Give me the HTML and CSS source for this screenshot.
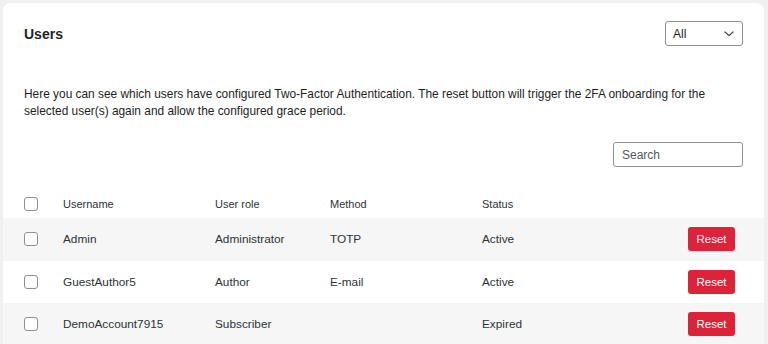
FILE: index.html
```html
<!DOCTYPE html>
<html>
<head>
<meta charset="utf-8">
<link rel="stylesheet" href="styles.css">
</head>
<body>
<div class="card">
  <div class="head">
    <h1 class="title">Users</h1>
    <div class="select">
      <span>All</span>
      <svg class="chev" width="10" height="6" viewBox="0 0 10 6"><path d="M1 1 L5 4.6 L9 1" fill="none" stroke="#3c434a" stroke-width="1.2" stroke-linecap="round" stroke-linejoin="round"/></svg>
    </div>
  </div>
  <p class="desc">Here you can see which users have configured Two-Factor Authentication. The reset button will trigger the 2FA onboarding for the selected user(s) again and allow the configured grace period.</p>
  <div class="searchrow">
    <div class="search">Search</div>
  </div>
  <div class="table">
    <div class="row th">
      <span class="cb"></span><span>Username</span><span>User role</span><span>Method</span><span>Status</span><span></span>
    </div>
    <div class="row alt">
      <span class="cb"></span><span>Admin</span><span>Administrator</span><span>TOTP</span><span>Active</span><span class="btn">Reset</span>
    </div>
    <div class="row">
      <span class="cb"></span><span>GuestAuthor5</span><span>Author</span><span>E-mail</span><span>Active</span><span class="btn">Reset</span>
    </div>
    <div class="row alt">
      <span class="cb"></span><span>DemoAccount7915</span><span>Subscriber</span><span></span><span>Expired</span><span class="btn">Reset</span>
    </div>
  </div>
</div>
</body>
</html>
```
FILE: styles.css
```css
html, body { margin: 0; padding: 0; }
body {
  background: #f0f0f1;
  font-family: "Liberation Sans", Arial, sans-serif;
  color: #1e1e1e;
  padding: 3px 4px 0 3px;
  height: 344px;
  box-sizing: border-box;
  overflow: hidden;
}
.card {
  background: #fff;
  border-radius: 8px 8px 0 0;
  padding-top: 18px;
  height: 341px;
  box-sizing: border-box;
  overflow: hidden;
}
.head {
  display: flex;
  justify-content: space-between;
  align-items: center;
  padding: 0 21px 0 21px;
  height: 25px;
}
.title {
  margin: 0;
  font-size: 14px;
  font-weight: bold;
  color: #1d2327;
}
.select {
  width: 78px;
  height: 25px;
  box-sizing: border-box;
  border: 1px solid #8c8f94;
  border-radius: 3px;
  display: flex;
  align-items: center;
  justify-content: space-between;
  padding: 0 8px 0 7px;
  font-size: 12px;
  color: #1e1e1e;
}
.chev { display: block; }
.desc {
  margin: 40px 0 0 0;
  padding: 0 21px;
  font-size: 11.9px;
  line-height: 17px;
  color: #1e1e1e;
}
.searchrow {
  display: flex;
  justify-content: flex-end;
  padding: 0 21px;
  margin-top: 22px;
}
.search {
  width: 130px;
  height: 25px;
  box-sizing: border-box;
  border: 1px solid #8c8f94;
  border-radius: 3px;
  display: flex;
  align-items: center;
  padding-left: 8px;
  font-size: 12px;
  color: #50575e;
}
.table { margin-top: 23px; }
.row {
  display: grid;
  grid-template-columns: 39px 152px 115px 152px 1fr 47px;
  align-items: center;
  padding: 0 29px 0 21px;
  height: 42.5px;
  font-size: 11.8px;
  color: #2c3338;
}
.row.th { height: 28px; font-size: 11px; }
.row.alt { background: #f6f6f6; }
.cb {
  width: 14px;
  height: 14px;
  box-sizing: border-box;
  border: 1px solid #8c8f94;
  border-radius: 3px;
  background: #fff;
}
.btn {
  height: 24px;
  background: #dd2339;
  color: #fff;
  border-radius: 3px;
  display: flex;
  align-items: center;
  justify-content: center;
  font-size: 11.5px;
}
```
